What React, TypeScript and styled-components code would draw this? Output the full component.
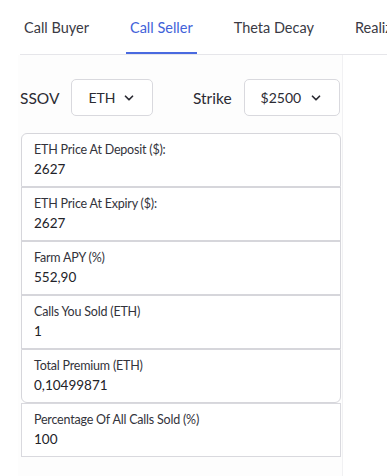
import React, { useState } from 'react';
import styled, { createGlobalStyle } from 'styled-components';
import { ChevronDown } from 'lucide-react';

const GlobalStyle = createGlobalStyle`
  html, body {
    margin: 0;
    padding: 0;
    background: #ffffff;
    font-family: Lato, "Noto Sans", sans-serif;
    color: #2b2b33;
  }
`;

const Page = styled.div`
  width: 387px;
  height: 476px;
  overflow: hidden;
  padding-left: 20px;
  box-sizing: border-box;
`;

const TabBar = styled.div`
  display: flex;
  gap: 33px;
  height: 54px;
  border-bottom: 1px solid #e6e6ea;
  white-space: nowrap;
  overflow: hidden;
`;

const Tab = styled.button<{ $active?: boolean }>`
  flex: none;
  background: none;
  border: none;
  padding: 0 4px;
  margin: 0;
  height: 54px;
  font-family: inherit;
  font-size: 14.5px;
  color: ${p => (p.$active ? '#4262d9' : '#3a3a44')};
  border-bottom: 2px solid ${p => (p.$active ? '#4a6ae0' : 'transparent')};
  box-sizing: border-box;
  padding-top: 2px;
  cursor: pointer;
`;

const Panel = styled.div`
  width: 320px;
  margin-left: -2px;
  padding: 24px 2px 20px 2px;
  background: #fdfdfd;
  border-right: 1px solid #f1f1f3;
  min-height: 420px;
`;

const ControlRow = styled.div`
  display: flex;
  align-items: center;
  height: 37px;
  margin-bottom: 17px;
`;

const ControlLabel = styled.span<{ $gap?: number }>`
  font-size: 15.5px;
  color: #2b2b33;
  margin-left: ${p => p.$gap ?? 0}px;
  margin-right: 12px;
`;

const Select = styled.button<{ $width: number }>`
  display: flex;
  align-items: center;
  justify-content: space-between;
  width: ${p => p.$width}px;
  height: 37px;
  box-sizing: border-box;
  padding: 0 16px;
  background: #ffffff;
  border: 1px solid #d9d9de;
  border-radius: 5px;
  font-family: inherit;
  font-size: 14px;
  color: #2b2b33;
  cursor: pointer;
`;

const List = styled.div`
  display: flex;
  flex-direction: column;
  width: 320px;
  margin-left: 1px;
`;

const Item = styled.div<{ $first?: boolean; $last?: boolean }>`
  height: 54px;
  box-sizing: border-box;
  padding: 7px 12px 0 12px;
  background: #ffffff;
  border: 1px solid #d6d6db;
  border-radius: ${p =>
    p.$first ? '6px 6px 0 0' : p.$last ? '0 0 6px 6px' : '0'};
`;

const ItemLabel = styled.div`
  font-size: 12.5px;
  letter-spacing: -0.2px;
  line-height: 18px;
  color: #33333b;
`;

const ItemValue = styled.div`
  font-size: 13.5px;
  line-height: 20px;
  color: #222228;
`;

const SoloItem = styled(Item)`
  border-color: #d9d9de;
`;

const rows = [
  { label: 'ETH Price At Deposit ($):', value: '2627' },
  { label: 'ETH Price At Expiry ($):', value: '2627' },
  { label: 'Farm APY (%)', value: '552,90' },
  { label: 'Calls You Sold (ETH)', value: '1' },
  { label: 'Total Premium (ETH)', value: '0,10499871' },
];

const tabs = ['Call Buyer', 'Call Seller', 'Theta Decay', 'Realized'];

const App: React.FC = () => {
  const [active, setActive] = useState('Call Seller');

  return (
    <Page>
      <GlobalStyle />
      <TabBar>
        {tabs.map(t => (
          <Tab key={t} $active={t === active} onClick={() => setActive(t)}>
            {t}
          </Tab>
        ))}
      </TabBar>
      <Panel>
        <ControlRow>
          <ControlLabel>SSOV</ControlLabel>
          <Select $width={82}>
            ETH
            <ChevronDown size={14} strokeWidth={3} />
          </Select>
          <ControlLabel $gap={40}>Strike</ControlLabel>
          <Select $width={97}>
            $2500
            <ChevronDown size={14} strokeWidth={3} />
          </Select>
        </ControlRow>
        <List>
          {rows.map((r, i) => (
            <Item key={r.label} $first={i === 0} $last={i === rows.length - 1}>
              <ItemLabel>{r.label}</ItemLabel>
              <ItemValue>{r.value}</ItemValue>
            </Item>
          ))}
          <SoloItem>
            <ItemLabel>Percentage Of All Calls Sold (%)</ItemLabel>
            <ItemValue>100</ItemValue>
          </SoloItem>
        </List>
      </Panel>
    </Page>
  );
};

export default App;
